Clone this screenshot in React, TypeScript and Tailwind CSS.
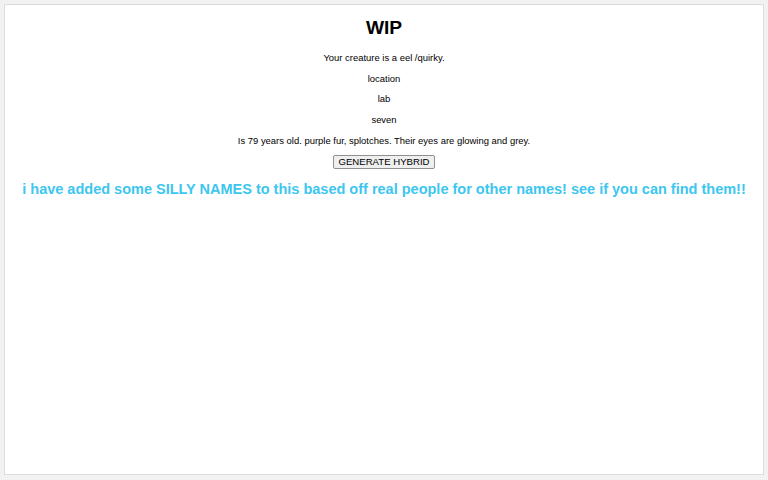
export default function App() {
  return (
    <div className="w-[768px] h-[480px] bg-[#f2f2f2] p-[4px]" style={{ fontFamily: '"Liberation Sans", Arial, sans-serif' }}>
      <div className="h-[471px] bg-white border border-[#dcdcdc] flex flex-col items-center pt-[12px] text-black">
        <h1 className="h-[22px] leading-[22px] text-[19.2px] font-bold">WIP</h1>
        <p className="mt-[12.5px] leading-[11px] text-[9.45px]">Your creature is a eel /quirky.</p>
        <p className="mt-[10px] leading-[11px] text-[9.45px]">location</p>
        <p className="mt-[9.5px] leading-[11px] text-[9.45px]">lab</p>
        <p className="mt-[9.5px] leading-[11px] text-[9.45px]">seven</p>
        <p className="mt-[10px] leading-[11px] text-[9.45px]">Is 79 years old. purple fur, splotches. Their eyes are glowing and grey.</p>
        <button className="mt-[9.5px] h-[14px] px-[5px] text-[9.6px] leading-[12px] bg-[#efefef] border border-[#8f8f8f] rounded-[2px]">
          GENERATE HYBRID
        </button>
        <h2 className="mt-[12px] leading-[17px] text-[14.5px] font-bold text-[#3cc6f0]">
          i have added some SILLY NAMES to this based off real people for other names! see if you can find them!!
        </h2>
      </div>
    </div>
  );
}
